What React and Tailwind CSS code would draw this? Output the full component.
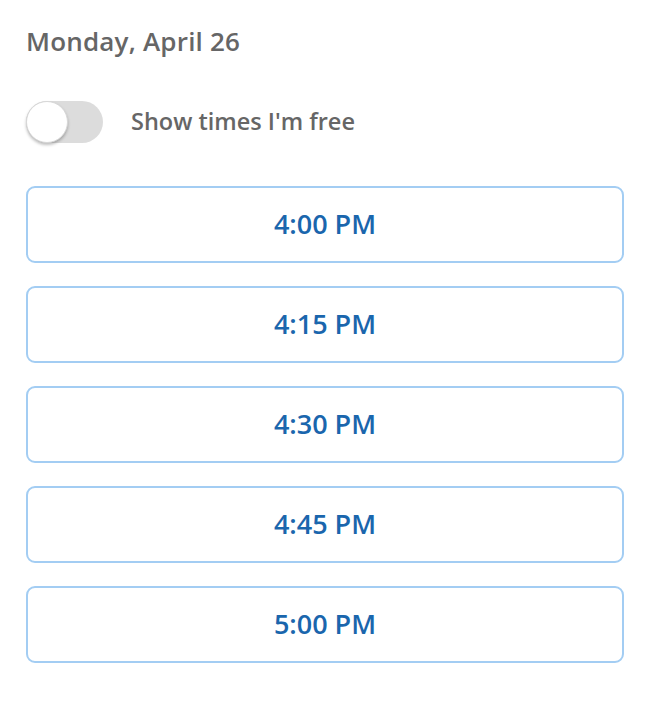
import React, { useState } from "react";

const times = ["4:00 PM", "4:15 PM", "4:30 PM", "4:45 PM", "5:00 PM"];

export default function App() {
  const [free, setFree] = useState(false);

  return (
    <div className="w-[654px] h-[704px] bg-white px-[26px] pt-[24px]" style={{ fontFamily: "'Open Sans', Lato, sans-serif" }}>
      <h2 className="text-[26px] leading-[34px] font-semibold text-[#666666] tracking-[0.2px]">Monday, April 26</h2>

      <div className="flex items-center mt-[43px] h-[42px]">
        <button
          onClick={() => setFree(!free)}
          className="relative w-[77px] h-[42px] rounded-full bg-[#dcdcdc] shrink-0"
        >
          <span className="absolute left-0 top-0 w-[42px] h-[42px] rounded-full bg-white border border-[#d8d8d8] shadow-[0_2px_3px_rgba(0,0,0,0.25)]" />
        </button>
        <span className="ml-[28px] text-[23.5px] text-[#666666] font-semibold">Show times I'm free</span>
      </div>

      <div className="flex flex-col gap-[23px] mt-[43px] w-[598px]">
        {times.map((t) => (
          <button
            key={t}
            className="h-[77px] rounded-[9px] border-2 border-[#a3cdf3] bg-white text-[27px] font-semibold text-[#1a66ad]"
          >
            {t}
          </button>
        ))}
      </div>
    </div>
  );
}
